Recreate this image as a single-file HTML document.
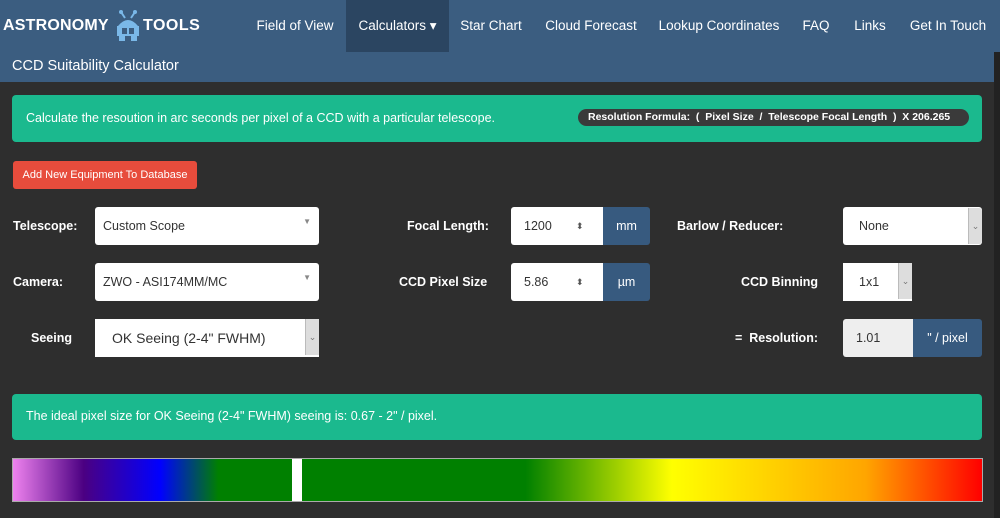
<!DOCTYPE html>
<html><head><style>
*{box-sizing:border-box;margin:0;padding:0}
body{width:1000px;height:518px;overflow:hidden;background:#222;font-family:"Liberation Sans",sans-serif;position:relative;color:#fff}
.nav{position:absolute;left:0;top:0;width:1000px;height:52px;background:#3b5d80}
.nav a{position:absolute;top:0;height:52px;line-height:52px;font-size:13.5px;color:#fff;text-align:center;white-space:nowrap}
.panel{position:absolute;left:0;top:52px;width:994px;height:466px;background:#2e2e2e}
.ph{position:absolute;left:0;top:52px;width:994px;height:30px;background:#3b5d80;font-size:14.5px;padding:6px 12px}
.green{position:absolute;background:#1bb98e;border-radius:4px;font-size:12.5px}
.lbl{position:absolute;font-size:12.5px;font-weight:bold}
.in{position:absolute;background:#fff;border-radius:3px;color:#333;font-size:12.5px;height:38px;line-height:38px}
.add{position:absolute;background:#375a7f;border-radius:0 3px 3px 0;height:38px;line-height:38px;text-align:center;font-size:12.5px}
.car{position:absolute;right:0;top:0;width:14px;height:36px;background:#ddd;border-left:1px solid #bbb;font-size:9px;color:#777;text-align:center;line-height:36px}
</style></head><body>
<div class="nav">
<div style="position:absolute;left:3px;top:17px;font-weight:bold;font-size:16px;letter-spacing:.2px">ASTRONOMY</div>
<svg style="position:absolute;left:114px;top:10px" width="28" height="32"><path d="M7 2l4 6M21 2l-4 6" stroke="#7ab8e8" stroke-width="2"/><circle cx="7" cy="2" r="2" fill="#7ab8e8"/><circle cx="21" cy="2" r="2" fill="#7ab8e8"/><path d="M4 16 Q14 4 24 16Z" fill="#7ab8e8"/><rect x="3" y="16" width="22" height="10" fill="#7ab8e8"/><rect x="8" y="18" width="5" height="6" fill="#3b5d80"/><rect x="15" y="18" width="5" height="6" fill="#3b5d80"/><rect x="5" y="26" width="6" height="5" fill="#7ab8e8"/><rect x="17" y="26" width="6" height="5" fill="#7ab8e8"/></svg>
<div style="position:absolute;left:143px;top:17px;font-weight:bold;font-size:16px;letter-spacing:.5px">TOOLS</div>
<a style="left:246px;width:98px">Field of View</a>
<a style="left:346px;width:103px;background:#2b4561">Calculators ▾</a>
<a style="left:450px;width:82px">Star Chart</a>
<a style="left:534px;width:114px">Cloud Forecast</a>
<a style="left:648px;width:142px">Lookup Coordinates</a>
<a style="left:790px;width:52px">FAQ</a>
<a style="left:842px;width:56px">Links</a>
<a style="left:898px;width:100px">Get In Touch</a>
</div>
<div class="panel"></div>
<div class="ph">CCD Suitability Calculator</div>
<div class="green" style="left:12px;top:95px;width:970px;height:47px;padding:16px 14px">Calculate the resoution in arc seconds per pixel of a CCD with a particular telescope.</div>
<div style="position:absolute;left:578px;top:109px;width:391px;height:17px;border-radius:9px;background:#3a3a3a;font-size:10.5px;font-weight:bold;line-height:17px;padding-left:10px;white-space:pre">Resolution Formula:  (  Pixel Size  /  Telescope Focal Length  )  X 206.265</div>
<div style="position:absolute;left:13px;top:161px;width:184px;height:28px;background:#e74c3c;border-radius:3px;font-size:11px;line-height:28px;text-align:center">Add New Equipment To Database</div>
<div class="lbl" style="left:13px;top:219px">Telescope:</div>
<div class="in" style="left:95px;top:207px;width:224px;padding-left:8px">Custom Scope<span style="position:absolute;right:8px;font-size:8px;color:#888;top:-4px">▼</span></div>
<div class="lbl" style="left:13px;top:275px">Camera:</div>
<div class="in" style="left:95px;top:263px;width:224px;padding-left:8px">ZWO - ASI174MM/MC<span style="position:absolute;right:8px;font-size:8px;color:#888;top:-4px">▼</span></div>
<div class="lbl" style="left:31px;top:331px">Seeing</div>
<div class="in" style="left:95px;top:319px;width:224px;padding-left:17px;font-size:14px;border-radius:0">OK Seeing (2-4" FWHM)<div class="car">⌄</div></div>
<div class="lbl" style="left:407px;top:219px">Focal Length:</div>
<div class="in" style="left:511px;top:207px;width:95px;padding-left:13px;border-radius:3px 0 0 3px">1200<span style="position:absolute;left:65px;font-size:9px;color:#555">⬍</span></div>
<div class="add" style="left:603px;top:207px;width:47px">mm</div>
<div class="lbl" style="left:399px;top:275px">CCD Pixel Size</div>
<div class="in" style="left:511px;top:263px;width:95px;padding-left:13px;border-radius:3px 0 0 3px">5.86<span style="position:absolute;left:65px;font-size:9px;color:#555">⬍</span></div>
<div class="add" style="left:603px;top:263px;width:47px">µm</div>
<div class="lbl" style="left:677px;top:219px">Barlow / Reducer:</div>
<div class="in" style="left:843px;top:207px;width:139px;padding-left:16px">None<div class="car" style="border-radius:0 3px 3px 0;top:1px">⌄</div></div>
<div class="lbl" style="left:741px;top:275px">CCD Binning</div>
<div class="in" style="left:843px;top:263px;width:69px;padding-left:16px;border-radius:0">1x1<div class="car">⌄</div></div>
<div class="lbl" style="left:735px;top:331px">=&nbsp; Resolution:</div>
<div class="in" style="left:843px;top:319px;width:72px;padding-left:13px;background:#eee;border-radius:3px 0 0 3px">1.01</div>
<div class="add" style="left:913px;top:319px;width:69px">" / pixel</div>
<div class="green" style="left:12px;top:394px;width:970px;height:46px;padding:15px 14px">The ideal pixel size for OK Seeing (2-4" FWHM) seeing is: 0.67 - 2" / pixel.</div>
<div style="position:absolute;left:12px;top:458px;width:971px;height:44px;border:1px solid #aaa;background:linear-gradient(to right,#ee82ee 0%,#4b0082 7.3%,#0000ff 15.2%,#008000 21.2%,#008000 52.9%,#ffff00 68%,#ffa500 88%,#ff0000 100%)"></div>
<div style="position:absolute;left:292px;top:459px;width:10px;height:42px;background:#fff"></div>
</body></html>
